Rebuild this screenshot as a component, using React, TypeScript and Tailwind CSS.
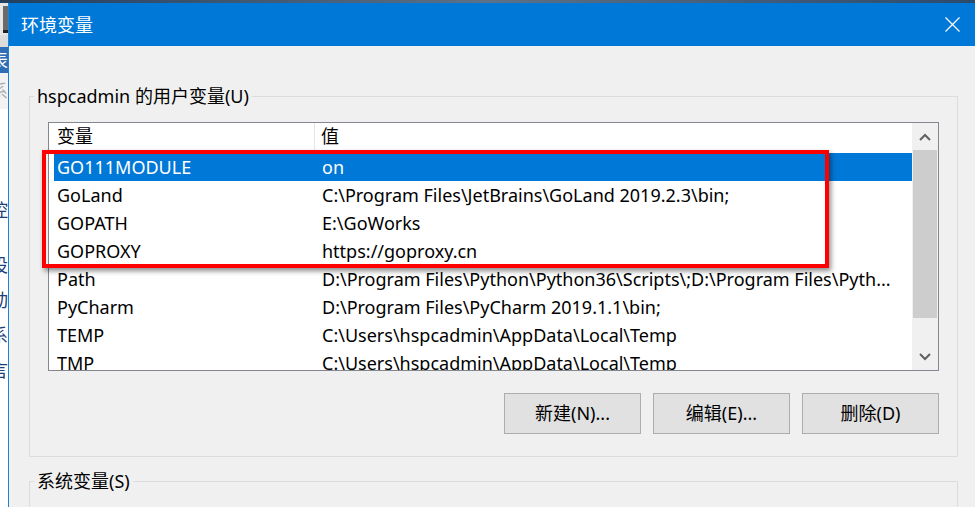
import React from "react";

const rows: [string, string][] = [
  ["GO111MODULE", "on"],
  ["GoLand", "C:\\Program Files\\JetBrains\\GoLand 2019.2.3\\bin;"],
  ["GOPATH", "E:\\GoWorks"],
  ["GOPROXY", "https://goproxy.cn"],
  ["Path", "D:\\Program Files\\Python\\Python36\\Scripts\\;D:\\Program Files\\Pyth..."],
  ["PyCharm", "D:\\Program Files\\PyCharm 2019.1.1\\bin;"],
  ["TEMP", "C:\\Users\\hspcadmin\\AppData\\Local\\Temp"],
  ["TMP", "C:\\Users\\hspcadmin\\AppData\\Local\\Temp"],
];

function Chevron({ up }: { up?: boolean }) {
  return (
    <svg width="12" height="8" viewBox="0 0 12 8" aria-hidden>
      <path
        d={up ? "M1 7 L6 2 L11 7" : "M1 1 L6 6 L11 1"}
        fill="none"
        stroke="#606060"
        strokeWidth="2"
      />
    </svg>
  );
}

// the window behind the dialog, only its right edge shows
function BackStrip() {
  return (
    <div className="flex w-[8px] shrink-0 flex-col overflow-hidden bg-[#f3f3f3]">
      <div className="flex h-[32px] shrink-0 justify-end bg-[#e6e6e6] pt-[3px]">
        <div className="h-[27px] w-[5px] border-b-[3px] border-[#222] bg-[#6a6a6a]" />
      </div>
      <div className="h-[12px] shrink-0 bg-[#dcdcdc]" />
      <div className="flex h-[26px] shrink-0 items-center overflow-hidden bg-[#2f6db5] text-[18px] text-white">
        <span className="-ml-[10px]">表</span>
      </div>
      <div className="flex h-[36px] shrink-0 items-center overflow-hidden text-[18px] text-[#aaa]">
        <span className="-ml-[10px]">系</span>
      </div>
      <div className="flex flex-1 flex-col overflow-hidden bg-white pt-[84px] text-[18px] leading-[35px] text-[#1d3f7a]">
        <span className="-ml-[10px]">控</span>
        <span className="-ml-[10px] mt-[20px]">设</span>
        <span className="-ml-[10px]">动</span>
        <span className="-ml-[10px]">系</span>
        <span className="-ml-[10px]">言</span>
      </div>
    </div>
  );
}

export default function App() {
  return (
    <div className="relative flex h-[507px] w-[975px] flex-col overflow-hidden bg-[#f0f0f0] font-['Noto_Sans','Noto_Sans_CJK_SC',sans-serif] text-[18px] text-black">
      <div className="h-[3px] shrink-0 bg-gradient-to-r from-[#22405f] via-[#5d7188] to-[#2c4b6c]" />
      <div className="flex min-h-0 flex-1">
        <BackStrip />
        <div className="flex flex-1 flex-col border-l border-[#1883d7]">
          {/* title bar */}
          <div className="flex h-[43px] shrink-0 items-center bg-[#0078d7] pl-[12px] pr-[15px] text-white">
            <span className="flex-1 leading-none">环境变量</span>
            <svg width="15" height="15" viewBox="0 0 15 15" aria-hidden>
              <path d="M0.5 0.5 L14.5 14.5 M14.5 0.5 L0.5 14.5" stroke="#fff" strokeWidth="1.2" />
            </svg>
          </div>

          <div className="flex-1 pl-[20px] pr-[17px] pt-[38px]">
            <fieldset className="border border-[#dcdcdc] px-[18px] pb-[22px]">
              <legend className="-ml-[14px] px-[3px] leading-[24px]">hspcadmin 的用户变量(U)</legend>

              <div className="mt-[14px] flex h-[249px] border border-[#828790] bg-white">
                <div className="flex min-w-0 flex-1 flex-col overflow-hidden">
                  <div className="flex h-[30px] shrink-0 pb-[3px]">
                    <div className="w-[266px] border-r border-[#e5e5e5] pl-[8px] leading-[27px]">变量</div>
                    <div className="pl-[6px] leading-[27px]">值</div>
                  </div>
                  {rows.map(([name, value], i) => (
                    <div
                      key={name}
                      className={
                        "ml-[5px] flex h-[28px] shrink-0 items-center " +
                        (i === 0 ? "bg-[#0078d7] text-white" : "")
                      }
                    >
                      <div className="w-[261px] shrink-0 pl-[3px]">{name}</div>
                      <div className="min-w-0 flex-1 truncate pl-[7px] pr-[10px]">{value}</div>
                    </div>
                  ))}
                </div>
                {/* scrollbar */}
                <div className="flex w-[26px] shrink-0 flex-col bg-[#f0f0f0]">
                  <div className="flex h-[27px] items-center justify-center">
                    <Chevron up />
                  </div>
                  <div className="mx-[1px] h-[168px] bg-[#cdcdcd]" />
                  <div className="flex-1" />
                  <div className="flex h-[27px] items-center justify-center">
                    <Chevron />
                  </div>
                </div>
              </div>

              <div className="mt-[22px] flex justify-end gap-[12px]">
                {["新建(N)...", "编辑(E)...", "删除(D)"].map((t) => (
                  <button
                    key={t}
                    className="flex h-[41px] w-[137px] items-center justify-center border border-[#adadad] bg-[#e1e1e1]"
                  >
                    {t}
                  </button>
                ))}
              </div>
            </fieldset>

            <fieldset className="mt-[12px] h-[80px] border border-[#dcdcdc] px-[18px]">
              <legend className="-ml-[14px] px-[3px] leading-[24px]">系统变量(S)</legend>
            </fieldset>
          </div>
        </div>
      </div>

      {/* red annotation box drawn over the list */}
      <div className="pointer-events-none absolute left-[42px] top-[150px] h-[118px] w-[787px] border-[4px] border-[#ff0000] shadow-[2px_3px_5px_rgba(0,0,0,0.45)]" />
    </div>
  );
}
